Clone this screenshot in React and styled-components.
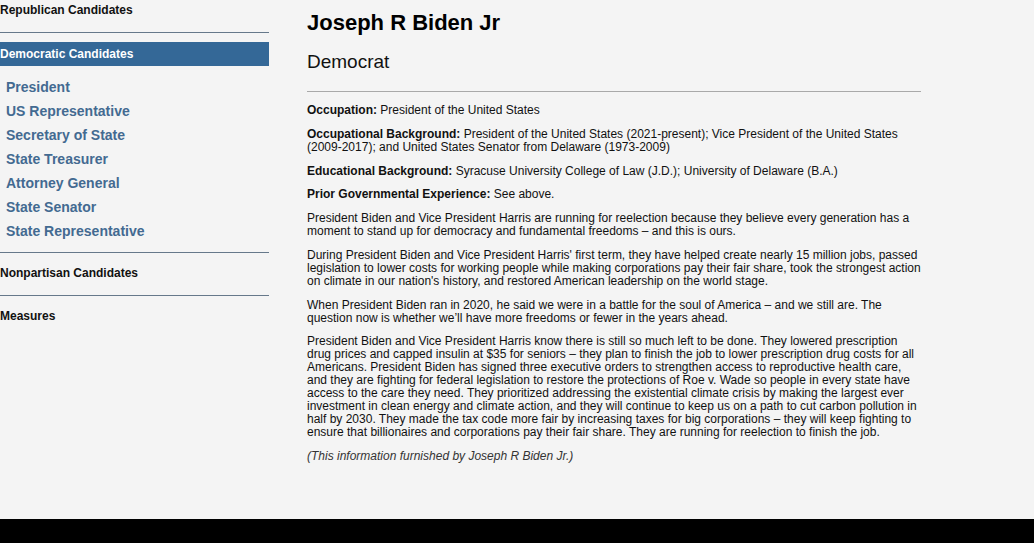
import React from 'react';
import styled, { createGlobalStyle } from 'styled-components';

const GlobalStyle = createGlobalStyle`
  html, body {
    margin: 0;
    padding: 0;
    background: #f4f4f4;
    font-family: "Liberation Sans", Arial, sans-serif;
    color: #111;
  }
`;

const offices = [
    'President',
    'US Representative',
    'Secretary of State',
    'State Treasurer',
    'Attorney General',
    'State Senator',
    'State Representative',
];

const paragraphs = [
    'President Biden and Vice President Harris are running for reelection because they believe every generation has a moment to stand up for democracy and fundamental freedoms – and this is ours.',
    "During President Biden and Vice President Harris' first term, they have helped create nearly 15 million jobs, passed legislation to lower costs for working people while making corporations pay their fair share, took the strongest action on climate in our nation's history, and restored American leadership on the world stage.",
    'When President Biden ran in 2020, he said we were in a battle for the soul of America – and we still are. The question now is whether we\u2019ll have more freedoms or fewer in the years ahead.',
    'President Biden and Vice President Harris know there is still so much left to be done. They lowered prescription drug prices and capped insulin at $35 for seniors – they plan to finish the job to lower prescription drug costs for all Americans. President Biden has signed three executive orders to strengthen access to reproductive health care, and they are fighting for federal legislation to restore the protections of Roe v. Wade so people in every state have access to the care they need. They prioritized addressing the existential climate crisis by making the largest ever investment in clean energy and climate action, and they will continue to keep us on a path to cut carbon pollution in half by 2030. They made the tax code more fair by increasing taxes for big corporations – they will keep fighting to ensure that billionaires and corporations pay their fair share. They are running for reelection to finish the job.',
];

const App = () => {
    return (
        <Page>
            <GlobalStyle />
            <Body>
                <Sidebar>
                    <SectionHeading first>Republican Candidates</SectionHeading>
                    <Divider />
                    <ActiveHeading>Democratic Candidates</ActiveHeading>
                    <OfficeList>
                        {offices.map((office) => (
                            <OfficeLink key={office}>{office}</OfficeLink>
                        ))}
                    </OfficeList>
                    <Divider />
                    <SectionHeading>Nonpartisan Candidates</SectionHeading>
                    <Divider />
                    <SectionHeading>Measures</SectionHeading>
                </Sidebar>
                <Main>
                    <Name>Joseph R Biden Jr</Name>
                    <Party>Democrat</Party>
                    <Rule />
                    <Para><Label>Occupation:</Label> President of the United States</Para>
                    <Para>
                        <Label>Occupational Background:</Label> President of the United States (2021-present); Vice President of the United States (2009-2017); and United States Senator from Delaware (1973-2009)
                    </Para>
                    <Para>
                        <Label>Educational Background:</Label> Syracuse University College of Law (J.D.); University of Delaware (B.A.)
                    </Para>
                    <Para><Label>Prior Governmental Experience:</Label> See above.</Para>
                    {paragraphs.map((text, i) => (
                        <Para key={i}>{text}</Para>
                    ))}
                    <Note>(This information furnished by Joseph R Biden Jr.)</Note>
                </Main>
            </Body>
            <Footer />
        </Page>
    );
};

export default App;

const Page = styled.div`
    display: flex;
    flex-direction: column;
    height: 100vh;
    overflow: hidden;
`;

const Body = styled.div`
    flex: 1;
    display: flex;
    gap: 38px;
`;

const Footer = styled.div`
    height: 24px;
    background: #000;
`;

const Sidebar = styled.nav`
    width: 269px;
    flex-shrink: 0;
`;

const SectionHeading = styled.div`
    font-size: 12px;
    font-weight: 700;
    line-height: 21px;
    color: #111;
    padding: ${(p) => (p.first ? '0 0 11px' : '10px 0 11px')};
`;

const Divider = styled.div`
    height: 1px;
    background: #66788a;
`;

const ActiveHeading = styled.div`
    margin-top: 9px;
    height: 24px;
    line-height: 24px;
    background: #346897;
    color: #fff;
    font-size: 12px;
    font-weight: 700;
`;

const OfficeList = styled.div`
    display: flex;
    flex-direction: column;
    padding: 9px 0;
`;

const OfficeLink = styled.a`
    display: block;
    padding-left: 6px;
    line-height: 24px;
    font-size: 14px;
    font-weight: 700;
    color: #436a91;
    text-decoration: none;
`;

const Main = styled.main`
    width: 614px;
    padding-top: 10px;
`;

const Name = styled.h1`
    margin: 0;
    font-size: 22px;
    line-height: 26px;
    font-weight: 700;
    color: #000;
`;

const Party = styled.div`
    margin-top: 15px;
    font-size: 19px;
    line-height: 22px;
    color: #111;
`;

const Rule = styled.hr`
    margin: 18px 0 12px;
    border: none;
    height: 1px;
    background: #a9a9a9;
`;

const Para = styled.p`
    margin: 0 0 10.75px;
    font-size: 12px;
    line-height: 13px;
    color: #111;
`;

const Label = styled.b`
    font-weight: 700;
`;

const Note = styled(Para)`
    font-style: italic;
    color: #333;
`;
